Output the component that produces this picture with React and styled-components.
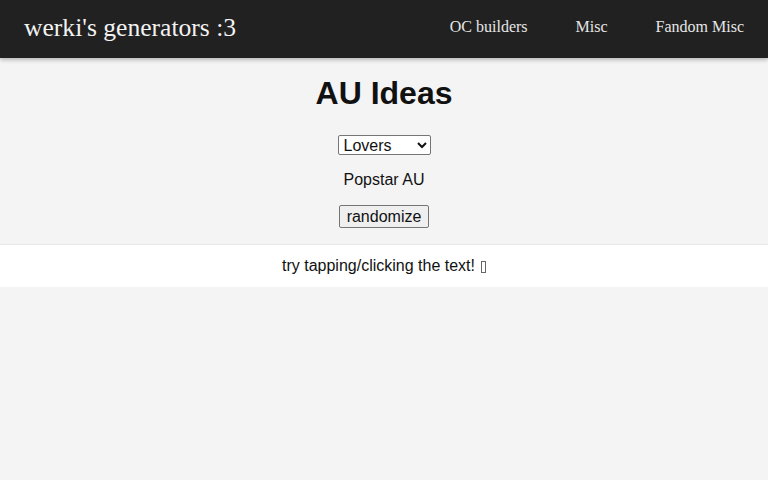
import React, { useState } from "react";
import styled, { createGlobalStyle } from "styled-components";

const Global = createGlobalStyle`
  html, body { margin: 0; padding: 0; background: #f4f4f4; }
  body { font-family: "Liberation Sans", Arial, sans-serif; color: #111; }
`;

const Header = styled.header`
  height: 58px;
  background: #212121;
  display: flex;
  align-items: center;
  justify-content: space-between;
  box-shadow: 0 2px 4px rgba(0,0,0,0.25);
  position: relative;
  z-index: 1;
`;

const Brand = styled.div`
  font-family: "Liberation Serif", "Times New Roman", serif;
  font-size: 25.6px;
  color: #f2f2f2;
  padding-left: 24px;
  margin-top: -2px;
`;

const Nav = styled.nav`
  display: flex;
  height: 100%;
  align-items: center;
`;

const NavLink = styled.a`
  font-family: "Liberation Serif", "Times New Roman", serif;
  font-size: 16px;
  color: #e6e6e6;
  padding: 0 24px;
  text-decoration: none;
  margin-top: -4px;
`;

const Main = styled.main`
  display: flex;
  flex-direction: column;
  align-items: center;
`;

const Title = styled.h1`
  font-size: 32px;
  font-weight: bold;
  margin: 17px 0 23px;
  line-height: 37px;
  color: #111;
`;

const Select = styled.select`
  font-family: "Liberation Sans", Arial, sans-serif;
  font-size: 16px;
  width: 93px;
  height: 20px;
  box-sizing: border-box;
  padding: 0 0 0 1px;
  border: 1px solid #767676;
  border-radius: 2px;
  background: #fff;
  color: #111;
`;

const Result = styled.p`
  font-size: 16px;
  line-height: 18px;
  margin: 16px 0 16px;
  cursor: pointer;
`;

const Button = styled.button`
  font-family: "Liberation Sans", Arial, sans-serif;
  font-size: 16px;
  height: 23px;
  box-sizing: border-box;
  padding: 0 7px;
  border: 1px solid #767676;
  border-radius: 2px;
  background: #efefef;
  color: #111;
  line-height: 18px;
`;

const Card = styled.div`
  align-self: stretch;
  margin-top: 17px;
  height: 42px;
  background: #fff;
  display: flex;
  align-items: center;
  justify-content: center;
  font-size: 16px;
  box-shadow: 0 2px 3px rgba(0,0,0,0.18), 0 -1px 1px rgba(0,0,0,0.04);
`;

const Tofu = styled.span`
  display: inline-block;
  width: 3px;
  height: 10px;
  border: 1px solid #666;
  margin-left: 6px;
  margin-top: 1px;
`;

export default function App() {
  const [cat, setCat] = useState("Lovers");
  return (
    <>
      <Global />
      <Header>
        <Brand>werki's generators :3</Brand>
        <Nav>
          <NavLink href="#">OC builders</NavLink>
          <NavLink href="#">Misc</NavLink>
          <NavLink href="#">Fandom Misc</NavLink>
        </Nav>
      </Header>
      <Main>
        <Title>AU Ideas</Title>
        <Select value={cat} onChange={(e) => setCat(e.target.value)}>
          <option>Lovers</option>
          <option>Friends</option>
          <option>Rivals</option>
        </Select>
        <Result>Popstar AU</Result>
        <Button>randomize</Button>
        <Card>
          try tapping/clicking the text!<Tofu aria-label="emoji" />
        </Card>
      </Main>
    </>
  );
}
